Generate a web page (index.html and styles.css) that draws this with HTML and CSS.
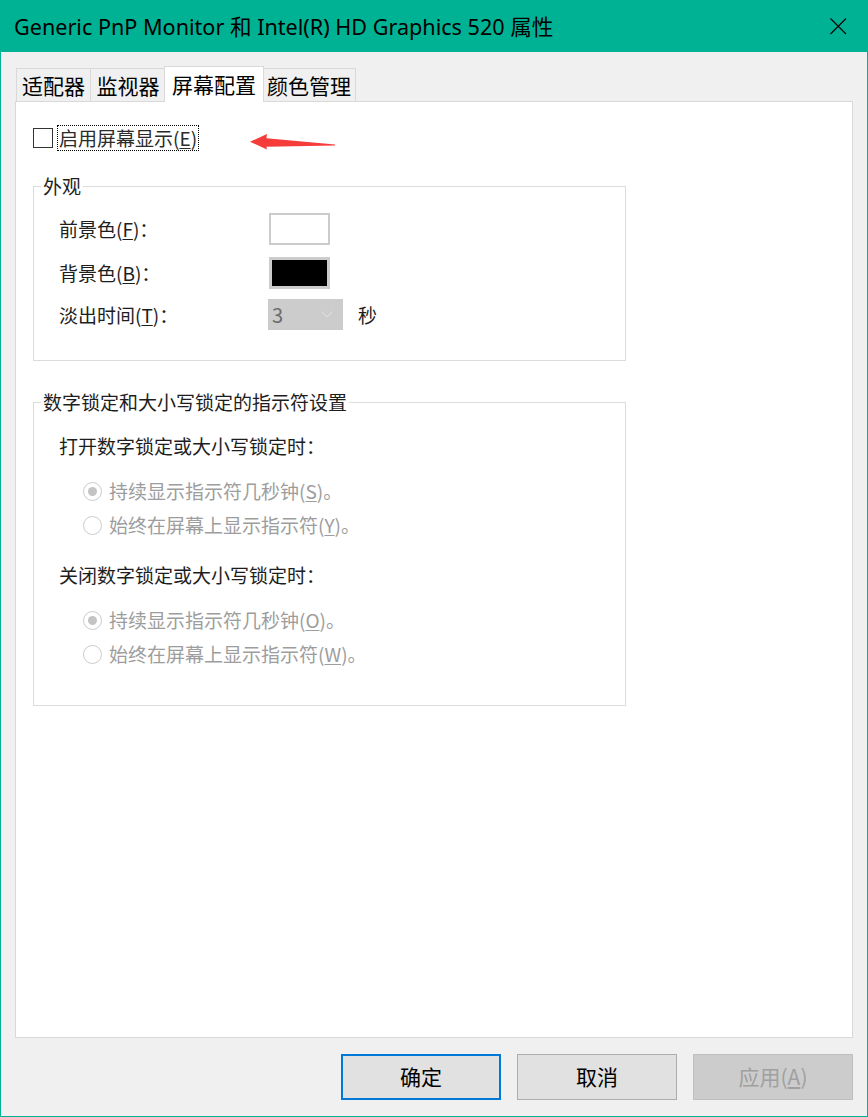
FILE: index.html
```html
<!DOCTYPE html>
<html lang="zh-CN">
<head>
<meta charset="utf-8">
<title>Generic PnP Monitor 和 Intel(R) HD Graphics 520 属性</title>
<link rel="stylesheet" href="styles.css">
</head>
<body>
<div class="window">
  <div class="titlebar">
    <span class="title">Generic PnP Monitor 和 Intel(R) HD Graphics 520 属性</span>
    <svg class="close" width="17" height="17" viewBox="0 0 17 17"><path d="M0.5 0.5 L16 16 M16 0.5 L0.5 16" stroke="#000" stroke-width="1.1" fill="none"/></svg>
  </div>
  <div class="content">
    <div class="tabs">
      <div class="tab t1">适配器</div>
      <div class="tab t2">监视器</div>
      <div class="tab active">屏幕配置</div>
      <div class="tab t4">颜色管理</div>
    </div>
    <div class="panel">
      <svg class="arrow" width="95" height="25" viewBox="0 0 95 25"><polygon points="4,11.7 21,4 20.4,8.3 89,14.6 89,15.6 20.4,16.8 21,19.5" fill="#f63b3b"/></svg>
      <div class="check-row">
        <span class="checkbox"></span>
        <span class="check-label">启用屏幕显示(<u>E</u>)</span>
      </div>

      <fieldset class="group g1">
        <legend>外观</legend>
        <div class="group-body">
          <div class="field-row r1">
            <span class="field-label">前景色(<u>F</u>)：</span>
            <span class="swatch white"></span>
          </div>
          <div class="field-row r2">
            <span class="field-label">背景色(<u>B</u>)：</span>
            <span class="swatch black"></span>
          </div>
          <div class="field-row r3">
            <span class="field-label">淡出时间(<u>T</u>)：</span>
            <span class="combo"><span class="combo-value">3</span><svg class="chev" width="12" height="7" viewBox="0 0 12 7"><path d="M0.5 0.5 L6 6 L11.5 0.5" stroke="#e4e4e4" stroke-width="1" fill="none"/></svg></span>
            <span class="unit">秒</span>
          </div>
        </div>
      </fieldset>

      <fieldset class="group g2">
        <legend>数字锁定和大小写锁定的指示符设置</legend>
        <div class="group-body body2">
          <div class="sub-head h1">打开数字锁定或大小写锁定时：</div>
          <div class="radio-row ra">
            <span class="radio checked"></span>
            <span class="radio-label">持续显示指示符几秒钟(<u>S</u>)。</span>
          </div>
          <div class="radio-row rb">
            <span class="radio"></span>
            <span class="radio-label">始终在屏幕上显示指示符(<u>Y</u>)。</span>
          </div>
          <div class="sub-head h2">关闭数字锁定或大小写锁定时：</div>
          <div class="radio-row ra">
            <span class="radio checked"></span>
            <span class="radio-label">持续显示指示符几秒钟(<u>O</u>)。</span>
          </div>
          <div class="radio-row rb">
            <span class="radio"></span>
            <span class="radio-label">始终在屏幕上显示指示符(<u>W</u>)。</span>
          </div>
        </div>
      </fieldset>
    </div>
    <div class="buttons">
      <div class="btn default">确定</div>
      <div class="btn">取消</div>
      <div class="btn disabled">应用(<u>A</u>)</div>
    </div>
  </div>
</div>
</body>
</html>
```
FILE: styles.css
```css
* { box-sizing: border-box; }
html, body { margin: 0; padding: 0; }
body {
  background: #f0f0f0;
  font-family: "Noto Sans CJK SC", "Noto Sans", sans-serif;
  color: #000;
}
.window {
  width: 868px;
  height: 1117px;
  border: 1px solid #00b294;
  display: flex;
  flex-direction: column;
  background: #f0f0f0;
}
.titlebar {
  height: 51px;
  flex: none;
  background: #00b294;
  display: flex;
  align-items: center;
  padding-left: 13px;
}
.title {
  font-family: "Noto Sans", "Noto Sans CJK SC", sans-serif;
  font-size: 21.6px;
  line-height: 28px;
  color: #000;
  white-space: nowrap;
}
.close {
  margin-left: auto;
  margin-right: 20px;
  display: block;
}
.content {
  flex: 1;
  display: flex;
  flex-direction: column;
  padding: 14px 14px 0 14px;
}
.tabs {
  display: flex;
  align-items: flex-end;
  height: 36px;
  margin-bottom: -1px;
  padding-left: 1px;
  font-size: 21px;
}
.tab {
  height: 34px;
  line-height: 32px;
  text-align: center;
  background: #f0f0f0;
  border: 1px solid #d9d9d9;
  border-bottom: none;
  white-space: nowrap;
}
.t1 { width: 75px; }
.t2 { width: 76px; margin-left: -1px; }
.tab.active {
  width: 100px;
  height: 36px;
  line-height: 34px;
  margin-left: -2px;
  background: #fff;
  position: relative;
  z-index: 1;
}
.t4 { width: 94px; margin-left: -2px; }
.panel {
  height: 937px;
  flex: none;
  background: #fff;
  border: 1px solid #d9d9d9;
  position: relative;
  padding: 23px 0 0 17px;
  font-size: 19px;
  color: #1e1e1e;
}
.arrow {
  position: absolute;
  left: 230px;
  top: 28px;
  display: block;
}
.check-row {
  display: flex;
  align-items: center;
  height: 26px;
}
.checkbox {
  width: 20px;
  height: 20px;
  border: 1px solid #333;
  background: #fff;
  flex: none;
}
.check-label {
  margin-left: 4px;
  height: 26px;
  line-height: 24px;
  border: 1px dotted #000;
  padding: 0 1px;
  color: #2b2b2b;
}
.group {
  margin: 0;
  padding: 0;
  width: 593px;
  border: 1px solid #dcdcdc;
  min-inline-size: 0;
}
.group legend {
  margin-left: 7px;
  padding: 0 2px;
  line-height: 24px;
  height: 24px;
}
.g1 { margin-top: 23px; }
.g2 { margin-top: 29px; }
.group-body {
  padding: 15px 0 30px 25px;
}
.field-row {
  display: flex;
  align-items: center;
  height: 32px;
}
.r2 { margin-top: 12px; }
.r3 { margin-top: 10px; height: 31px; }
.field-label {
  width: 210px;
  flex: none;
  line-height: 26px;
}
.swatch {
  width: 61px;
  height: 32px;
  border: 2px solid #cccccc;
  flex: none;
}
.swatch.white { background: #fff; }
.swatch.black { background: #000; border-width: 3px; height: 32px; }
.combo {
  width: 75px;
  height: 31px;
  margin-left: -1px;
  background: #cccccc;
  display: flex;
  align-items: center;
  padding-left: 4px;
  flex: none;
}
.combo-value {
  color: #6d6d6d;
  font-size: 20px;
  line-height: 26px;
}
.chev {
  margin-left: auto;
  margin-right: 10px;
  display: block;
}
.unit {
  margin-left: 15px;
  line-height: 26px;
}
.group-body.body2 {
  padding: 19px 0 38px 25px;
}
.sub-head {
  line-height: 26px;
  height: 26px;
}
.h2 { margin-top: 24px; }
.radio-row {
  display: flex;
  align-items: center;
  height: 26px;
  padding-left: 24px;
}
.radio-row.ra { margin-top: 19px; }
.radio-row.rb { margin-top: 8px; }
.radio {
  width: 19px;
  height: 19px;
  border-radius: 50%;
  border: 1px solid #cccccc;
  background: #fff;
  flex: none;
  display: flex;
  align-items: center;
  justify-content: center;
}
.radio.checked::after {
  content: "";
  width: 9px;
  height: 9px;
  border-radius: 50%;
  background: #c4c4c4;
}
.radio-label {
  margin-left: 7px;
  color: #9d9d9d;
  line-height: 26px;
  white-space: nowrap;
}
.buttons {
  display: flex;
  justify-content: flex-end;
  gap: 16px;
  margin-top: 16px;
  height: 46px;
}
.btn {
  width: 160px;
  height: 46px;
  border: 1px solid #adadad;
  background: #e1e1e1;
  font-size: 21px;
  line-height: 42px;
  text-align: center;
  color: #000;
}
.btn.default {
  border: 2px solid #0078d7;
  line-height: 40px;
}
.btn.disabled {
  background: #cccccc;
  border-color: #bfbfbf;
  color: #a0a0a0;
}
u { text-underline-offset: 2px; }
```
